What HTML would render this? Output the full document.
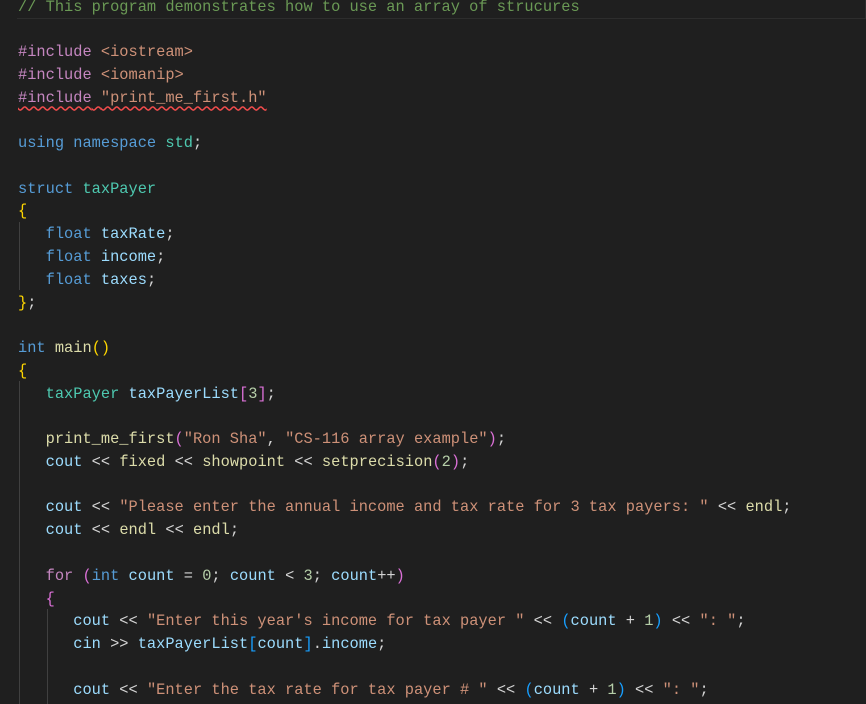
<!DOCTYPE html>
<html><head><meta charset="utf-8"><style>
body{margin:0;width:866px;height:704px;background:#1f1f1f;overflow:hidden;position:relative;font-family:"Liberation Mono",monospace;font-size:15.35px;color:#d4d4d4}
.l{position:absolute;left:18px;height:22.77px;line-height:22.77px;white-space:pre}
.cur{position:absolute;left:17px;right:0;top:-6px;height:23px;border:1px solid #2d2d2d;border-left:none}
.g{position:absolute;width:1px;background:#404040}
.c{color:#6a9955}.p{color:#c586c0}.s{color:#ce9178}.k{color:#569cd6}.t{color:#4ec9b0}.v{color:#9cdcfe}.f{color:#dcdcaa}.n{color:#b5cea8}
.y{color:#ffd700}.m{color:#da70d6}.b{color:#179fff}
.sq{text-decoration:underline wavy #f14c4c;text-underline-offset:4px}
</style></head><body>
<div class="cur"></div>
<div class="g" style="left:19px;top:222px;height:68px"></div>
<div class="g" style="left:19px;top:381px;height:323px"></div>
<div class="g" style="left:47px;top:609px;height:95px"></div>
<div class="l" style="top:-4.5px"><span class="c">// This program demonstrates how to use an array of strucures</span></div>
<div class="l" style="top:41.04px"><span class="p">#include</span> <span class="s">&lt;iostream&gt;</span></div>
<div class="l" style="top:63.81px"><span class="p">#include</span> <span class="s">&lt;iomanip&gt;</span></div>
<div class="l" style="top:86.58px"><span class="sq"><span class="p">#include</span> <span class="s">"print_me_first.h"</span></span></div>
<div class="l" style="top:132.12px"><span class="k">using</span> <span class="k">namespace</span> <span class="t">std</span>;</div>
<div class="l" style="top:177.66px"><span class="k">struct</span> <span class="t">taxPayer</span></div>
<div class="l" style="top:200.43px"><span class="y">{</span></div>
<div class="l" style="top:223.2px">   <span class="k">float</span> <span class="v">taxRate</span>;</div>
<div class="l" style="top:245.97px">   <span class="k">float</span> <span class="v">income</span>;</div>
<div class="l" style="top:268.74px">   <span class="k">float</span> <span class="v">taxes</span>;</div>
<div class="l" style="top:291.51px"><span class="y">}</span>;</div>
<div class="l" style="top:337.05px"><span class="k">int</span> <span class="f">main</span><span class="y">()</span></div>
<div class="l" style="top:359.82px"><span class="y">{</span></div>
<div class="l" style="top:382.59px">   <span class="t">taxPayer</span> <span class="v">taxPayerList</span><span class="m">[</span><span class="n">3</span><span class="m">]</span>;</div>
<div class="l" style="top:428.13px">   <span class="f">print_me_first</span><span class="m">(</span><span class="s">"Ron Sha"</span>, <span class="s">"CS-116 array example"</span><span class="m">)</span>;</div>
<div class="l" style="top:450.9px">   <span class="v">cout</span> &lt;&lt; <span class="f">fixed</span> &lt;&lt; <span class="f">showpoint</span> &lt;&lt; <span class="f">setprecision</span><span class="m">(</span><span class="n">2</span><span class="m">)</span>;</div>
<div class="l" style="top:496.44px">   <span class="v">cout</span> &lt;&lt; <span class="s">"Please enter the annual income and tax rate for 3 tax payers: "</span> &lt;&lt; <span class="f">endl</span>;</div>
<div class="l" style="top:519.21px">   <span class="v">cout</span> &lt;&lt; <span class="f">endl</span> &lt;&lt; <span class="f">endl</span>;</div>
<div class="l" style="top:564.75px">   <span class="p">for</span> <span class="m">(</span><span class="k">int</span> <span class="v">count</span> = <span class="n">0</span>; <span class="v">count</span> &lt; <span class="n">3</span>; <span class="v">count</span>++<span class="m">)</span></div>
<div class="l" style="top:587.52px">   <span class="m">{</span></div>
<div class="l" style="top:610.29px">      <span class="v">cout</span> &lt;&lt; <span class="s">"Enter this year's income for tax payer "</span> &lt;&lt; <span class="b">(</span><span class="v">count</span> + <span class="n">1</span><span class="b">)</span> &lt;&lt; <span class="s">": "</span>;</div>
<div class="l" style="top:633.06px">      <span class="v">cin</span> &gt;&gt; <span class="v">taxPayerList</span><span class="b">[</span><span class="v">count</span><span class="b">]</span>.<span class="v">income</span>;</div>
<div class="l" style="top:678.6px">      <span class="v">cout</span> &lt;&lt; <span class="s">"Enter the tax rate for tax payer # "</span> &lt;&lt; <span class="b">(</span><span class="v">count</span> + <span class="n">1</span><span class="b">)</span> &lt;&lt; <span class="s">": "</span>;</div>
</body></html>
